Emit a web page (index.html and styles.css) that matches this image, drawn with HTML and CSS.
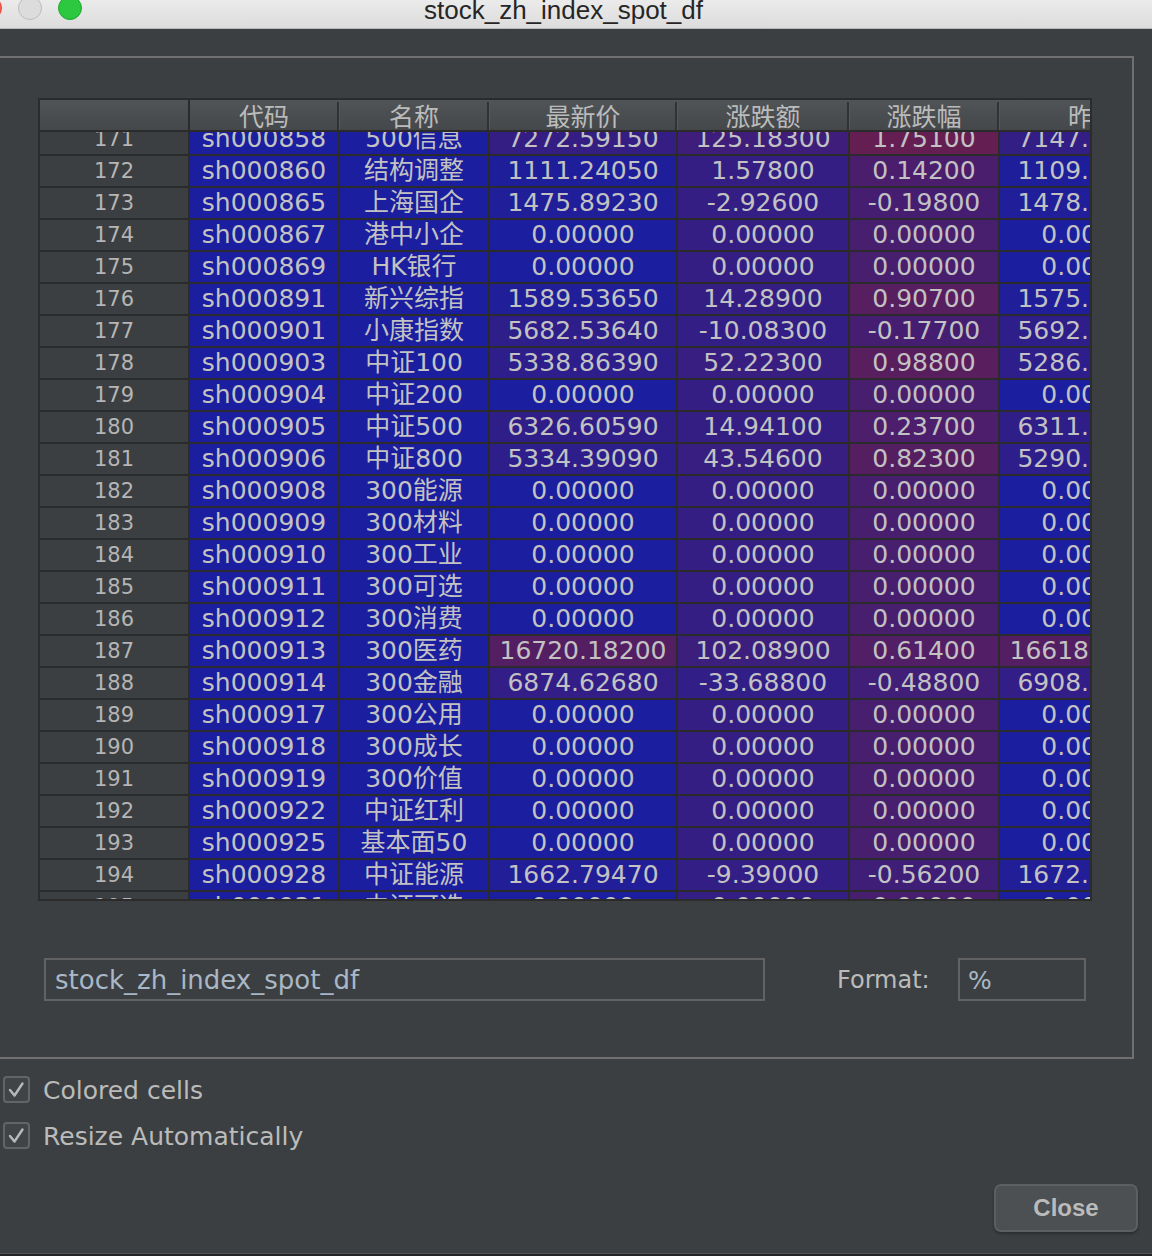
FILE: index.html
```html
<!DOCTYPE html>
<html lang="zh">
<head>
<meta charset="utf-8">
<title>stock_zh_index_spot_df</title>
<link rel="stylesheet" href="styles.css">
</head>
<body>
<div class="window">
  <div class="titlebar">
    <div class="lights"><span class="light red"></span><span class="light gray"></span><span class="light green"></span></div>
    <div class="title">stock_zh_index_spot_df</div>
  </div>
  <div class="dialog">
    <div class="group">
      <div class="table">
        <div class="thead">
          <div class="th idx"></div>
          <div class="th">代码</div>
          <div class="th">名称</div>
          <div class="th">最新价</div>
          <div class="th">涨跌额</div>
          <div class="th">涨跌幅</div>
          <div class="th">昨收</div>
        </div>
        <div class="tbody">
          <div class="rows">
            <div class="td idx">171</div><div class="td s">sh000858</div><div class="td s">500信息</div><div class="td" style="background:#341e84">7272.59150</div><div class="td" style="background:#3e1e7a">125.18300</div><div class="td" style="background:#641e52">1.75100</div><div class="td" style="background:#331e85">7147.40850</div>
            <div class="td idx">172</div><div class="td s">sh000860</div><div class="td s">结构调整</div><div class="td" style="background:#1f1e9a">1111.24050</div><div class="td" style="background:#341e84">1.57800</div><div class="td" style="background:#4a1e6c">0.14200</div><div class="td" style="background:#1f1e9a">1109.66250</div>
            <div class="td idx">173</div><div class="td s">sh000865</div><div class="td s">上海国企</div><div class="td" style="background:#201e99">1475.89230</div><div class="td" style="background:#341e84">-2.92600</div><div class="td" style="background:#451e72">-0.19800</div><div class="td" style="background:#201e99">1478.81830</div>
            <div class="td idx">174</div><div class="td s">sh000867</div><div class="td s">港中小企</div><div class="td z0">0.00000</div><div class="td z1">0.00000</div><div class="td z2">0.00000</div><div class="td z0">0.00000</div>
            <div class="td idx">175</div><div class="td s">sh000869</div><div class="td s">HK银行</div><div class="td z0">0.00000</div><div class="td z1">0.00000</div><div class="td z2">0.00000</div><div class="td z0">0.00000</div>
            <div class="td idx">176</div><div class="td s">sh000891</div><div class="td s">新兴综指</div><div class="td" style="background:#201e98">1589.53650</div><div class="td" style="background:#351e83">14.28900</div><div class="td" style="background:#571e60">0.90700</div><div class="td" style="background:#201e98">1575.24750</div>
            <div class="td idx">177</div><div class="td s">sh000901</div><div class="td s">小康指数</div><div class="td" style="background:#2e1e8a">5682.53640</div><div class="td" style="background:#331e85">-10.08300</div><div class="td" style="background:#451e72">-0.17700</div><div class="td" style="background:#2e1e8a">5692.61940</div>
            <div class="td idx">178</div><div class="td s">sh000903</div><div class="td s">中证100</div><div class="td" style="background:#2d1e8b">5338.86390</div><div class="td" style="background:#381e80">52.22300</div><div class="td" style="background:#581e5e">0.98800</div><div class="td" style="background:#2d1e8b">5286.64090</div>
            <div class="td idx">179</div><div class="td s">sh000904</div><div class="td s">中证200</div><div class="td z0">0.00000</div><div class="td z1">0.00000</div><div class="td z2">0.00000</div><div class="td z0">0.00000</div>
            <div class="td idx">180</div><div class="td s">sh000905</div><div class="td s">中证500</div><div class="td" style="background:#301e88">6326.60590</div><div class="td" style="background:#351e83">14.94100</div><div class="td" style="background:#4c1e6b">0.23700</div><div class="td" style="background:#301e88">6311.66490</div>
            <div class="td idx">181</div><div class="td s">sh000906</div><div class="td s">中证800</div><div class="td" style="background:#2d1e8b">5334.39090</div><div class="td" style="background:#371e80">43.54600</div><div class="td" style="background:#551e61">0.82300</div><div class="td" style="background:#2d1e8b">5290.84490</div>
            <div class="td idx">182</div><div class="td s">sh000908</div><div class="td s">300能源</div><div class="td z0">0.00000</div><div class="td z1">0.00000</div><div class="td z2">0.00000</div><div class="td z0">0.00000</div>
            <div class="td idx">183</div><div class="td s">sh000909</div><div class="td s">300材料</div><div class="td z0">0.00000</div><div class="td z1">0.00000</div><div class="td z2">0.00000</div><div class="td z0">0.00000</div>
            <div class="td idx">184</div><div class="td s">sh000910</div><div class="td s">300工业</div><div class="td z0">0.00000</div><div class="td z1">0.00000</div><div class="td z2">0.00000</div><div class="td z0">0.00000</div>
            <div class="td idx">185</div><div class="td s">sh000911</div><div class="td s">300可选</div><div class="td z0">0.00000</div><div class="td z1">0.00000</div><div class="td z2">0.00000</div><div class="td z0">0.00000</div>
            <div class="td idx">186</div><div class="td s">sh000912</div><div class="td s">300消费</div><div class="td z0">0.00000</div><div class="td z1">0.00000</div><div class="td z2">0.00000</div><div class="td z0">0.00000</div>
            <div class="td idx">187</div><div class="td s">sh000913</div><div class="td s">300医药</div><div class="td" style="background:#541e63">16720.18200</div><div class="td" style="background:#3c1e7c">102.08900</div><div class="td" style="background:#521e65">0.61400</div><div class="td" style="background:#541e63">16618.09300</div>
            <div class="td idx">188</div><div class="td s">sh000914</div><div class="td s">300金融</div><div class="td" style="background:#321e86">6874.62680</div><div class="td" style="background:#311e87">-33.68800</div><div class="td" style="background:#411e77">-0.48800</div><div class="td" style="background:#321e86">6908.31480</div>
            <div class="td idx">189</div><div class="td s">sh000917</div><div class="td s">300公用</div><div class="td z0">0.00000</div><div class="td z1">0.00000</div><div class="td z2">0.00000</div><div class="td z0">0.00000</div>
            <div class="td idx">190</div><div class="td s">sh000918</div><div class="td s">300成长</div><div class="td z0">0.00000</div><div class="td z1">0.00000</div><div class="td z2">0.00000</div><div class="td z0">0.00000</div>
            <div class="td idx">191</div><div class="td s">sh000919</div><div class="td s">300价值</div><div class="td z0">0.00000</div><div class="td z1">0.00000</div><div class="td z2">0.00000</div><div class="td z0">0.00000</div>
            <div class="td idx">192</div><div class="td s">sh000922</div><div class="td s">中证红利</div><div class="td z0">0.00000</div><div class="td z1">0.00000</div><div class="td z2">0.00000</div><div class="td z0">0.00000</div>
            <div class="td idx">193</div><div class="td s">sh000925</div><div class="td s">基本面50</div><div class="td z0">0.00000</div><div class="td z1">0.00000</div><div class="td z2">0.00000</div><div class="td z0">0.00000</div>
            <div class="td idx">194</div><div class="td s">sh000928</div><div class="td s">中证能源</div><div class="td" style="background:#211e98">1662.79470</div><div class="td" style="background:#331e85">-9.39000</div><div class="td" style="background:#3f1e78">-0.56200</div><div class="td" style="background:#211e98">1672.18470</div>
            <div class="td idx">195</div><div class="td s">sh000931</div><div class="td s">中证可选</div><div class="td z0">0.00000</div><div class="td z1">0.00000</div><div class="td z2">0.00000</div><div class="td z0">0.00000</div>
          </div>
        </div>
      </div>
      <div class="fields">
        <div class="input name">stock_zh_index_spot_df</div>
        <div class="fmt-label">Format:</div>
        <div class="input fmt">%</div>
      </div>
    </div>
    <div class="checks">
      <div class="check"><span class="box"><svg viewBox="0 0 27 27" width="27" height="27"><path d="M7 14 L11.5 19.5 L19.5 7.5" fill="none" stroke="#b9b9b9" stroke-width="2.4" stroke-linecap="round" stroke-linejoin="round"/></svg></span><span class="label">Colored cells</span></div>
      <div class="check"><span class="box"><svg viewBox="0 0 27 27" width="27" height="27"><path d="M7 14 L11.5 19.5 L19.5 7.5" fill="none" stroke="#b9b9b9" stroke-width="2.4" stroke-linecap="round" stroke-linejoin="round"/></svg></span><span class="label">Resize Automatically</span></div>
    </div>
    <div class="buttons"><button class="close">Close</button></div>
  </div>
  <div class="dock"></div>
</div>
</body>
</html>
```

FILE: styles.css
```css
* { box-sizing: border-box; }
html, body { margin: 0; padding: 0; }
body {
  width: 1152px;
  height: 1256px;
  overflow: hidden;
  background: #3c3f41;
  font-family: "DejaVu Sans", "Noto Sans CJK SC", sans-serif;
  color: #bbbbbb;
}
.window { width: 1152px; height: 1256px; display: flex; flex-direction: column; }

.titlebar {
  height: 29px;
  flex: none;
  display: flex;
  background: linear-gradient(#ebebeb, #dcdcdc);
  border-bottom: 1px solid #b9b9b9;
  overflow: hidden;
}
.lights { display: flex; gap: 16px; margin-left: -22px; margin-top: -4px; align-self: flex-start; }
.light { width: 24px; height: 24px; border-radius: 50%; display: block; }
.light.red { background: #fe5f57; border: 1px solid #e0443e; }
.light.gray { background: #dcdcdc; border: 1px solid #bcbcbc; }
.light.green { background: #2bc840; border: 1px solid #1fa82f; }
.title {
  flex: 1;
  text-align: center;
  padding-right: 107px;
  font-family: "Liberation Sans", Arial, sans-serif;
  font-size: 26px;
  line-height: 20px;
  color: #262626;
  align-self: flex-start;
}

.dialog { height: 1224px; flex: none; display: flex; flex-direction: column; }
.group {
  margin-top: 27px;
  width: 1134px;
  height: 1003px;
  border-top: 2px solid #707070;
  border-right: 2px solid #707070;
  border-bottom: 2px solid #707070;
  padding-top: 40px;
  padding-left: 38px;
}

.table {
  width: 1054px;
  height: 803px;
  border: 2px solid #2b2b2b;
  background: #2b2b2b;
  display: flex;
  flex-direction: column;
  gap: 2px;
  overflow: hidden;
}
.thead {
  display: grid;
  grid-template-columns: 150px 150px 150px 188px 172px 150px 188px;
  height: 30px;
  flex: none;
  background: linear-gradient(#515457, #45484b);
  width: 1148px;
  overflow: hidden;
}
.th {
  position: relative;
  text-align: center;
  font-size: 25px;
  line-height: 30px;
  padding-top: 3px;
  padding-right: 2px;
  white-space: nowrap;
}
.th::after {
  content: "";
  position: absolute;
  right: 0;
  top: 2px;
  bottom: 2px;
  width: 2px;
  background: #303234;
  border-right: 1px solid #55585b;
}
.th.idx::after { top: 0; bottom: 0; background: #2b2b2b; border-right: none; }

.tbody { height: 767px; overflow: hidden; flex: none; }
.rows {
  margin-top: -8px;
  display: grid;
  grid-template-columns: 148px 148px 148px 186px 170px 148px 186px;
  grid-auto-rows: 30px;
  gap: 2px;
  width: 1146px;
}
.td {
  text-align: center;
  font-size: 25px;
  line-height: 30px;
  white-space: nowrap;
  overflow: hidden;
  color: #c2c2c2;
}
.td.idx { background: #3c3f41; font-size: 21px; color: #b5b5b5; }
.td.s, .td.z0 { background: #1b1e9e; }
.td.z1 { background: #341e84; }
.td.z2 { background: #481e6f; }

.fields {
  margin-top: 57px;
  margin-left: -38px;
  display: flex;
  align-items: center;
}
.input {
  height: 43px;
  border: 2px solid #626262;
  background: #3c3f41;
  color: #a9b7c6;
  font-size: 26px;
  line-height: 41px;
  white-space: nowrap;
}
.input.name { margin-left: 44px; width: 721px; padding-left: 9px; }
.fmt-label { margin-left: 72px; width: 121px; font-size: 24px; color: #bbbbbb; }
.input.fmt { width: 128px; padding-left: 8px; font-size: 25px; }

.checks { margin-top: 17px; display: flex; flex-direction: column; gap: 19px; }
.check { display: flex; align-items: center; gap: 13px; margin-left: 3px; height: 27px; }
.box {
  width: 27px;
  height: 27px;
  border: 2px solid #646464;
  border-radius: 4px;
  background: #414446;
  display: flex;
  align-items: center;
  justify-content: center;
  overflow: hidden;
}
.box svg { flex: none; }
.label { font-size: 25px; line-height: 30px; color: #bbbbbb; padding-top: 2px; }

.buttons { margin-top: 35px; display: flex; justify-content: flex-end; padding-right: 14px; }
.close {
  width: 144px;
  height: 48px;
  border-radius: 7px;
  border: 2px solid #5b5f61;
  background: #4c5052;
  color: #bbbbbb;
  font-family: "Liberation Sans", Arial, sans-serif;
  font-weight: bold;
  font-size: 24px;
  box-shadow: 0 2px 3px rgba(0,0,0,0.3);
  padding: 0;
}

.dock { margin-top: auto; height: 3px; background: #222324; border-top: 1px solid #555; }
```
